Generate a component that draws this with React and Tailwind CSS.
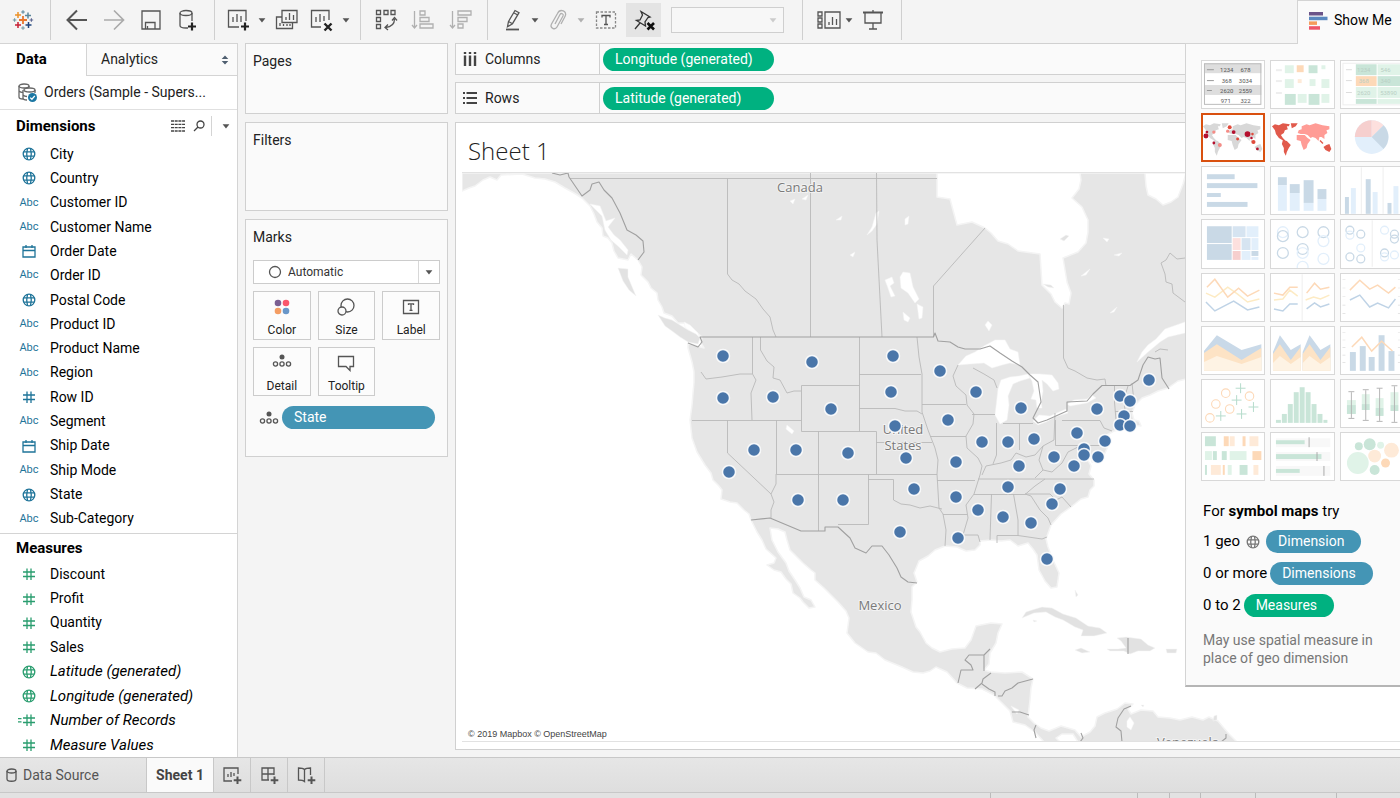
import React, { useState } from "react";

const dimensions = [
  ["geo", "City"],
  ["geo", "Country"],
  ["abc", "Customer ID"],
  ["abc", "Customer Name"],
  ["date", "Order Date"],
  ["abc", "Order ID"],
  ["geo", "Postal Code"],
  ["abc", "Product ID"],
  ["abc", "Product Name"],
  ["abc", "Region"],
  ["num", "Row ID"],
  ["abc", "Segment"],
  ["date", "Ship Date"],
  ["abc", "Ship Mode"],
  ["geo", "State"],
  ["abc", "Sub-Category"],
];

const measures = [
  ["num", "Discount"],
  ["num", "Profit"],
  ["num", "Quantity"],
  ["num", "Sales"],
  ["geo", "Latitude (generated)", true],
  ["geo", "Longitude (generated)", true],
  ["calc", "Number of Records", true],
  ["num", "Measure Values", true],
];

// one mark per state, in map coordinates
const states = [
  [723, 356], [812, 362], [893, 356], [940, 371], [723, 398], [773, 397], [831, 409],
  [891, 392], [976, 392], [1021, 408], [948, 420], [895, 426], [1149, 380], [1097, 409],
  [1120, 396], [1130, 401], [1124, 416], [1120, 425], [1130, 426], [1105, 441], [1077, 433],
  [1084, 449], [1084, 455], [1098, 457], [754, 450], [796, 450], [848, 453], [906, 458],
  [956, 462], [982, 442], [1008, 442], [1034, 439], [1054, 457], [1074, 466], [1019, 466],
  [729, 472], [798, 500], [843, 500], [914, 489], [956, 497], [1008, 487], [1060, 489],
  [1052, 504], [978, 510], [1003, 517], [1031, 523], [900, 532], [958, 538], [1047, 559],
];

/* ---------- icons ---------- */

const Icon = ({ children, className = "h-6 w-6", box = "0 0 24 24" }) => (
  <svg viewBox={box} className={className} fill="none" stroke="currentColor" strokeWidth="1.3" aria-hidden="true">
    {children}
  </svg>
);

const Caret = ({ className = "text-[#555]" }) => (
  <svg viewBox="0 0 8 5" className={`h-[5px] w-2 shrink-0 ${className}`} aria-hidden="true">
    <path d="M0.6 0.3h6.8L4 4.5z" fill="currentColor" />
  </svg>
);

const Plus = ({ x, y, r, c, w = 1.5 }) => (
  <path d={`M${x - r} ${y}h${r * 2}M${x} ${y - r}v${r * 2}`} stroke={c} strokeWidth={w} />
);

const Logo = () => (
  <Icon>
    <Plus x={12} y={12} r={4} c="#e8762d" w={1.8} />
    <Plus x={7} y={7} r={3} c="#eb9129" />
    <Plus x={17} y={7.5} r={3} c="#5b879b" />
    <Plus x={7} y={17} r={3} c="#c72035" />
    <Plus x={17.5} y={17} r={3} c="#1f457e" />
    <Plus x={12} y={4} r={1.8} c="#59879b" w={1.1} />
    <Plus x={12} y={20} r={1.8} c="#7199a6" w={1.1} />
    <Plus x={3.6} y={12} r={1.8} c="#7199a6" w={1.1} />
    <Plus x={20.4} y={12} r={1.8} c="#5c6692" w={1.1} />
  </Icon>
);

const GeoGlyph = () => (
  <>
    <circle cx="13" cy="7" r="5.8" />
    <path d="M7.8 4.8h10.4M7.8 9.2h10.4M11.5 1.4c-1 3.6-1 7.6 0 11.2M14.5 1.4c1 3.6 1 7.6 0 11.2" />
  </>
);

const FieldIcon = ({ type }) => {
  if (type === "abc") return <span className="w-[26px] text-center text-[11px]">Abc</span>;
  return (
    <Icon box="0 0 26 14" className="h-[14px] w-[26px]">
      {type === "geo" && <GeoGlyph />}
      {type === "date" && <path d="M7 3h12v10H7zM7 6.5h12M10 1v3M16 1v3" />}
      {type === "num" && <path d="M7 5h12M7 9.5h12M11 1.5v11.5M15 1.5v11.5" />}
      {type === "calc" && <path d="M7 5h12M7 9.5h12M11 1.5v11.5M15 1.5v11.5M2 5.6h3.5M2 8.8h3.5" />}
    </Icon>
  );
};

const DetailIcon = () => (
  <Icon box="0 0 20 14" className="h-[14px] w-5">
    <circle cx="10" cy="3" r="2.5" fill="#555" stroke="none" />
    <circle cx="3.5" cy="10" r="2.1" />
    <circle cx="10" cy="10" r="2.1" />
    <circle cx="16.5" cy="10" r="2.1" />
  </Icon>
);

const ToolButton = ({ label, className = "w-[37px]", children }) => (
  <button type="button" aria-label={label} title={label} className={`flex h-[34px] items-center justify-center ${className}`}>
    {children}
  </button>
);

const Group = ({ className, children }) => (
  <div className={`flex h-10 shrink-0 items-center border-r border-[#cfcfcf] ${className}`}>{children}</div>
);

const Toolbar = () => (
  <header className="flex h-[43px] items-start text-[#555]">
    <Group className="w-[51px] pl-[11px]"><Logo /></Group>

    <Group className="w-[164px] justify-center pr-px">
      <ToolButton label="Undo">
        <Icon><path d="M22 12H3M12 2.5L2.5 12l9.5 9.5" strokeWidth="2" /></Icon>
      </ToolButton>
      <ToolButton label="Redo" className="w-[37px] text-[#aaa]">
        <Icon><path d="M2 12h19M12 2.5l9.5 9.5-9.5 9.5" strokeWidth="1.7" /></Icon>
      </ToolButton>
      <ToolButton label="Save">
        <Icon><path d="M3 3h18v18H3zM6.5 21v-6.500H16V21M8.5 18v3" /></Icon>
      </ToolButton>
      <ToolButton label="New data source">
        <Icon>
          <ellipse cx="10" cy="5" rx="6" ry="2.5" />
          <path d="M4 5v12.5c0 1.5 3 2.5 6 2.5h2M16 5v8" />
          <path d="M16 14.5v8M12 18.5h8" stroke="#222" strokeWidth="2.2" />
        </Icon>
      </ToolButton>
    </Group>

    <Group className="w-[146px] pl-[7px]">
      <ToolButton label="New worksheet" className="w-8">
        <Icon>
          <path d="M13 19H2.5V2.5H20V13M7 14V9M11 14V6M15 14V8" />
          <path d="M19 14.5v8M15 18.5h8" stroke="#222" strokeWidth="2.2" />
        </Icon>
      </ToolButton>
      <ToolButton label="New worksheet options" className="w-4"><Caret /></ToolButton>
      <ToolButton label="Duplicate" className="w-[34px]">
        <Icon>
          <path d="M7 2.5h15v12H7zM11 12V9M14.5 12V5M18.5 12V7M7 9H1.5v11.5h16v-6M5 18v-3M8.5 18v-2M12 18v-2M15 18v-2" />
        </Icon>
      </ToolButton>
      <ToolButton label="Clear sheet" className="w-[34px]">
        <Icon>
          <path d="M12 19H2.5V2.5H20V12M7 14V9M11 14V6M15 13V8" />
          <path d="M15.5 15.5l7 7M22.5 15.5l-7 7" stroke="#222" strokeWidth="2.4" />
        </Icon>
      </ToolButton>
      <ToolButton label="Clear sheet options" className="w-4"><Caret /></ToolButton>
    </Group>

    <Group className="w-[127px] pl-[6px]">
      <ToolButton label="Swap rows and columns">
        <Icon>
          <path d="M2.5 2.5h4v4h-4zM10 2.5h4v4h-4zM17 2.5h4v4h-4zM2.5 9.5h4v4h-4zM2.5 16.5h4v4h-4z" />
          <path d="M20.5 11c0 6-4 8-9 8.500M18 12.500l2.500-3 2.500 3M14 16.500l-3 3 3 2.500" />
        </Icon>
      </ToolButton>
      <ToolButton label="Sort ascending" className="w-[38px] text-[#b0b0b0]">
        <Icon><path d="M3.5 3v16M1 17l2.500 3 2.500-3M9 3h5v4H9zM9 9.500h9v4H9zM9 16h13v4H9z" /></Icon>
      </ToolButton>
      <ToolButton label="Sort descending" className="w-[37px] text-[#b0b0b0]">
        <Icon><path d="M3.5 3v16M1 17l2.500 3 2.500-3M9 3h13v4H9zM9 9.500h9v4H9zM9 16h5v4H9z" /></Icon>
      </ToolButton>
    </Group>

    <Group className="w-[315px] pl-[9px]">
      <ToolButton label="Highlight" className="w-8">
        <Icon>
          <path d="M7.5 13.500L14 2.500l4 2.200-6.500 11-5 3zM7.500 13.500l4 2.200M12.700 4.800l4 2.200" />
          <path d="M5 21.500h13" strokeWidth="1.8" />
        </Icon>
      </ToolButton>
      <ToolButton label="Highlight options" className="w-3"><Caret /></ToolButton>
      <ToolButton label="Group members" className="w-[34px] text-[#b0b0b0]">
        <Icon><path d="M9 16l5-9.500c1.200-2 4-.5 3 1.500l-6 11c-2 3.500-7.500 1-5.500-3l6-10.500C14 0 22 3 19 8.500l-4 7.500" /></Icon>
      </ToolButton>
      <ToolButton label="Group options" className="w-3"><Caret className="text-[#b0b0b0]" /></ToolButton>
      <ToolButton label="Show mark labels" className="mr-[2px] w-[37px]">
        <Icon>
          <path d="M2.5 4h19v16h-19z" strokeDasharray="2.5 1.5" stroke="#888" />
          <path d="M8 9.500V7.500h8v2M12 7.500v9M10 16.500h4" />
        </Icon>
      </ToolButton>
      <ToolButton label="Fix axes" className="w-[35px] bg-[#e4e4e4] text-[#333]">
        <Icon>
          <path d="M9 3.500l9 5.500-2 .5-3 4.500.5 4-9-5.500 3.500-.5L10.500 7zM8 15l-5 6" />
          <path d="M15.500 15l6.500 6.500M22 15l-6.500 6.500" stroke="#111" strokeWidth="2.600" />
        </Icon>
      </ToolButton>
      <div className="ml-[10px] flex h-[26px] w-[113px] items-center border border-[#cfcfcf] bg-[#f7f7f7] pr-[6px]">
        <select aria-label="Fit" disabled className="h-full min-w-0 flex-1 appearance-none bg-transparent" />
        <Caret className="text-[#ccc]" />
      </div>
    </Group>

    <Group className="w-[99px] pl-[10px]">
      <ToolButton label="Show cards" className="w-8">
        <Icon>
          <path d="M1 4h4v4H1zM1 10h4v4H1zM1 16h4v4H1zM8 4h15v16H8zM12 17v-3M15.5 17V9M19.5 17v-6" />
        </Icon>
      </ToolButton>
      <ToolButton label="Show cards options" className="w-2"><Caret /></ToolButton>
      <ToolButton label="Presentation mode" className="ml-1 w-8">
        <Icon><path d="M2 4.500h20" strokeWidth="2" /><path d="M4 4.500V15h16V4.500M12 15v6M8 21h8M12 2v2" /></Icon>
      </ToolButton>
    </Group>
  </header>
);

const FieldList = ({ fields, className }) => (
  <ul className={`grid auto-rows-fr ${className}`}>
    {fields.map(([type, name, italic]) => (
      <li key={name} className="flex items-center gap-2 pl-4">
        <FieldIcon type={type} />
        <span className={italic ? "text-[15px] text-black italic" : "text-black"}>{name}</span>
      </li>
    ))}
  </ul>
);

const Sidebar = () => (
  <aside className="flex w-[238px] shrink-0 flex-col border-r border-[#d4d4d4] bg-white">
    <div role="tablist" className="flex h-[33px] border-t border-[#d4d4d4]">
      <button type="button" role="tab" aria-selected="true" className="w-[86px] pb-[2px] pl-4 text-left text-[15px] font-bold text-black">
        Data
      </button>
      <button
        type="button"
        role="tab"
        aria-selected="false"
        className="flex flex-1 items-center justify-between border-b border-l border-[#d4d4d4] bg-[#fafafa] pr-2 pl-[14px]"
      >
        Analytics
        <svg viewBox="0 0 8 10" className="h-[10px] w-2" fill="#4f5f70" aria-hidden="true">
          <path d="M4 0.500l3.300 3.600H0.700zM4 9.500L0.700 5.900h6.600z" />
        </svg>
      </button>
    </div>
    <div className="flex h-[34px] items-center gap-[6px] border-b border-[#e0e0e0] pl-[18px]">
      <Icon box="0 0 20 20" className="h-5 w-5 text-[#666]">
        <ellipse cx="6" cy="3" rx="5" ry="2" />
        <path d="M1 3v11c0 1.500 2 2 4 2M5 7v8c0 1.500 2 2 4 2M11 3v1.500M1 8c1 1 2 1.500 4 1.500M5 12c1 1 2 1.500 4 1.500" />
        <ellipse cx="11.5" cy="7" rx="5.5" ry="2" />
        <path d="M17 7v3" />
        <circle cx="14.5" cy="14.5" r="4.500" fill="#1b77a3" stroke="none" />
        <path d="M12.200 14.600l1.700 1.600 2.900-3.400" stroke="#fff" />
      </Icon>
      <span>Orders (Sample - Supers...</span>
    </div>
    <div className="flex h-8 items-center text-[#444]">
      <h2 className="flex-1 pl-4 text-[15px] font-bold text-black">Dimensions</h2>
      <button type="button" aria-label="View data" className="mr-2">
        <Icon box="0 0 14 12" className="h-3 w-[14px]">
          <path d="M0 1h14M0 4.300h14M0 7.600h14M0 11h14" strokeDasharray="3 0.700" />
        </Icon>
      </button>
      <button type="button" aria-label="Find field" className="mr-[6px]">
        <Icon box="0 0 12 12" className="h-3 w-3"><circle cx="7.5" cy="4.5" r="3.5" /><path d="M5 7L1 11" /></Icon>
      </button>
      <button type="button" aria-label="Field options" className="flex h-5 items-center border-l border-[#d4d4d4] pr-[7px] pl-[10px]">
        <Caret />
      </button>
    </div>
    <FieldList fields={dimensions} className="h-[389px] text-[#1f7499]" />
    <h2 className="mt-[2px] h-[29px] border-t border-[#d4d4d4] pl-4 text-[15px] leading-[28px] font-bold text-black">Measures</h2>
    <FieldList fields={measures} className="flex-1 text-[#2a9d6f]" />
  </aside>
);

const markCards = [
  ["Color", (
    <Icon key="c" box="0 0 18 18" className="h-[18px] w-[18px]">
      <g stroke="none">
        <circle cx="5" cy="5" r="3.3" fill="#7b5f92" />
        <circle cx="13" cy="5" r="3.3" fill="#f9566b" />
        <circle cx="5" cy="13" r="3.3" fill="#f49d63" />
        <circle cx="13" cy="13" r="3.3" fill="#6997c9" />
      </g>
    </Icon>
  )],
  ["Size", (
    <Icon key="s" box="0 0 18 18" className="h-[18px] w-[18px]">
      <circle cx="10.5" cy="7.5" r="6.5" />
      <circle cx="5" cy="13" r="4" fill="#fafafa" />
    </Icon>
  )],
  ["Label", (
    <Icon key="l" box="0 0 18 18" className="h-[18px] w-[18px]">
      <path d="M1.5 2.500h15v13h-15zM6.500 7V5.800h5V7M9 5.800v6.500M7.500 12.300h3" />
    </Icon>
  )],
  ["Detail", <DetailIcon key="d" />],
  ["Tooltip", (
    <Icon key="t" box="0 0 18 18" className="h-[18px] w-[18px]">
      <path d="M1.5 2.500h15v10H13v4L9 12.500H1.500z" />
    </Icon>
  )],
];

const Shelf = ({ title, className = "", children }) => (
  <section className={`border border-[#d0d0d0] bg-[#fafafa] px-[7px] pt-2 ${className}`}>
    <h2 className="leading-[18px]">{title}</h2>
    {children}
  </section>
);

const Pill = ({ className, children }) => (
  <span className={`inline-flex h-[23px] items-center rounded-full pl-3 text-[14px] whitespace-nowrap text-white ${className}`}>
    {children}
  </span>
);

const Shelves = () => (
  <div className="flex w-[203px] shrink-0 flex-col gap-2">
    <Shelf title="Pages" className="h-[71px]" />
    <Shelf title="Filters" className="h-[89px]" />
    <Shelf title="Marks" className="h-[238px]">
      <div className="mt-[14px] flex h-6 items-center border border-[#ccc] bg-white pl-[14px] text-[#555]">
        <Icon box="0 0 14 14" className="h-[14px] w-[14px]"><circle cx="7" cy="7" r="5.5" /></Icon>
        <select aria-label="Mark type" className="ml-[6px] h-full flex-1 appearance-none text-[12px] text-[#333]">
          <option>Automatic</option>
        </select>
        <span className="flex h-full w-[21px] items-center justify-center border-l border-[#d8d8d8]"><Caret /></span>
      </div>
      <div className="mt-[7px] grid grid-cols-3 gap-[7px]">
        {markCards.map(([name, icon]) => (
          <button
            key={name}
            type="button"
            className="flex h-[49px] flex-col items-center justify-end border border-[#ccc] bg-[#fcfcfc] pb-px text-[12px] text-[#555]"
          >
            <span className="flex h-6 items-start">{icon}</span>
            <span className="leading-4 text-[#222]">{name}</span>
          </button>
        ))}
      </div>
      <div className="mt-[10px] flex items-center pl-[6px] text-[#555]">
        <DetailIcon />
        <Pill className="ml-[3px] w-[153px] bg-[#4495b5]">State</Pill>
      </div>
    </Shelf>
  </div>
);

const AxisShelf = ({ name, icon, field }) => (
  <div className="flex h-8 items-center border border-r-0 border-[#d0d0d0] bg-[#fafafa]">
    <div className="flex h-full w-[144px] items-center gap-2 border-r border-[#d0d0d0] pl-[7px]">
      <Icon box="0 0 14 14" className="h-[14px] w-[14px] text-[#444]">{icon}</Icon>
      {name}
    </div>
    <Pill className="ml-[3px] w-[171px] bg-[#00b180]">{field}</Pill>
  </div>
);

/* ---------- map ---------- */

const LAND =
  "M462 173V191L469 188 475 186 483 180 490 177 497 180 501 175 522 174 535 178 545 179 555 182 565 188 574 193 582 198 590 206 594 214 597 222 602 228 603 236 608 238 612 243 614 251 618 258 628 260 631 254 638 260 642 267 641 275 648 282 651 288 657 293 658 300 662 307 664 313 672 316 678 323 685 323 691 328 702 337 701 343 704 348 697 346 688 343 688 348 692 362 694 372 694 382 693 393 692 405 690 420 692 438 697 452 705 465 711 473 713 480 719 486 722 490 721 499 730 502 737 503 744 510 749 514 751 520 757 532 762 540 766 549 776 558 774 563 767 565 774 570 781 572 786 579 791 584 793 593 800 598 803 602 809 608 815 607 811 600 804 597 800 588 795 580 789 571 786 563 778 552 772 540 770 528 778 529 785 532 787 540 790 550 797 557 803 563 811 570 815 573 815 580 824 588 830 594 838 602 846 611 849 618 847 633 855 643 868 652 876 653 885 660 902 667 913 672 923 673 930 671 936 667 947 672 957 683 967 688 982 689 994 695 1000 701 1010 711 1013 722 1025 725 1035 732 1044 742H1060L1056 738 1062 734 1073 734 1078 742H1237L1229 734 1223 727 1218 721 1209 717 1203 720 1192 717 1180 720 1170 718 1158 717 1153 711 1141 710 1131 714 1128 709 1133 704 1125 703 1117 709 1105 713 1097 717 1095 726 1090 732 1081 737 1075 730 1061 726 1049 731 1041 728 1034 723 1028 717 1030 700 1031 688 1033 679 1022 672 1005 673 991 672 984 670 989 664 990 653 996 643 998 633 1002 624 991 623 976 626 971 640 965 648 952 649 940 652 932 648 926 643 920 632 916 627 911 612 912 600 912 587 917 582 914 573 919 561 928 556 935 550 945 546 957 547 966 551 975 550 980 545 980 541 991 540 1001 541 1010 540 1018 546 1028 543 1033 549 1037 555 1039 570 1045 581 1051 588 1057 587 1059 573 1053 560 1048 547 1046 539 1051 525 1061 514 1071 507 1081 499 1088 497 1090 490 1094 486 1094 480 1089 474 1091 466 1085 455 1089 448 1092 462 1098 462 1105 453 1110 442 1107 435 1114 431 1125 429 1133 425 1141 426 1139 421 1134 420 1132 413 1135 405 1139 401 1142 398 1150 395 1158 391 1168 388 1178 381 1190 378 1400 378V173Z";

const HUDSON_BAY =
  "M937 173V197L950 199 957 225 972 222 985 228 991 233 998 241 1008 244 1018 251 1040 254 1042 285 1051 294 1055 302 1062 308 1065 303 1069 304 1071 293 1067 282 1063 258 1078 252 1086 243 1088 232 1088 220 1082 207 1072 198 1079 189 1081 180 1080 173ZM1145 173L1146 186 1148 195 1156 199 1163 205 1171 202 1178 197 1183 184 1186 173Z";

const LAKES =
  "M958 365L966 356 975 352 984 346 995 340 1005 340 1010 349 1018 352 1020 365 1010 363 1002 365 992 368 984 363 970 364ZM998 389L1001 380 1010 377 1019 376 1028 374 1030 378 1020 381 1013 384 1008 396 1009 405 1007 420 1000 424 995 415 997 398ZM1028 374L1040 374 1052 375 1058 383 1059 389 1053 391 1047 384 1042 380 1043 391 1041 402 1042 408 1037 408 1036 400 1031 399 1034 391 1032 381ZM1033 421L1039 415 1050 416 1066 409 1068 413 1055 417 1046 422 1038 425ZM1067 404L1074 400 1087 399 1092 395 1096 398 1087 403 1070 406ZM1137 362L1142 352 1148 345 1156 339 1165 329 1185 322V333L1168 337 1160 342 1148 352ZM900 277L903 272 910 273 913 287 919 299 915 303 908 293 901 288ZM885 280L892 277 894 283 890 286 895 296 891 297 888 288ZM903 312L910 318 908 322 904 320ZM917 304L923 307 922 318 919 319ZM985 325L988 321 992 325 989 331ZM876 213L879 211 877 224 872 231 867 235 872 227ZM905 219L909 216 908 224 905 225ZM836 220L842 216 841 220ZM850 255L855 252 853 257ZM790 201L795 199 793 204ZM802 199L808 195 806 200ZM1081 276L1090 269 1086 275ZM1110 313L1117 307 1114 312ZM1103 238L1109 239 1107 242ZM1114 255L1122 253 1119 256ZM787 425L794 431 792 434 786 429ZM684 322L690 325 698 333 699 339 692 333 685 327ZM590 204L600 206 606 221 615 218 608 227 614 235 620 240 628 250 627 255 619 247 611 240 605 230 602 216ZM1011 706L1019 710 1017 714ZM1127 721L1130 717 1134 723 1131 730 1127 727Z";

const ISLANDS =
  "M658 315L665 318 672 320 680 325 688 330 696 334 700 338 698 344 688 342 680 337 672 331 665 326ZM618 268L628 269 628 277 636 296 629 290 623 281ZM1022 618L1026 612 1032 610 1042 607 1052 608 1063 614 1076 618 1088 626 1100 628 1107 633 1094 636 1081 636 1083 630 1075 627 1063 620 1055 617 1046 612 1034 613ZM1075 650L1081 648 1090 652 1082 653ZM1107 649L1118 649 1126 648 1121 641 1117 638 1126 637 1141 639 1148 645 1155 648 1150 651 1138 651 1130 654 1124 651 1110 651ZM1166 649H1177L1176 653H1167ZM1075 590L1078 595 1076 597ZM1043 284L1051 285 1054 288 1048 287ZM1060 239L1066 235 1069 236 1064 241ZM1033 620L1037 621 1034 622ZM1141 705L1144 705 1143 707ZM1214 716L1217 715 1217 720 1213 721Z";

const STATE_LINES =
  "M570 178.500H937M727.500 178.500V274L732 280 739 284 745 291 756 299 763 309 770 317 773 330 776 337M810.500 173V337M876.500 173L877 240 882 337M933.500 337V286L985 228M1063.500 305V358L1068 368 1075 371 1087 378 1097 380 1105 379 1106 386M692 420.500H801.500M701 372L706 379 722 377 740 374H752M752.500 337V374L756 380 751 393 752 420M760.500 337V350L767 361 774 367 773 378 780 380 787 393 794 391 801 391M801.500 385.500H859.500M801.500 385.500V431.500H876.500V474M859.500 337V431.500M859 374.500H921M859 408.500H895L905 411 917 411 922 414M917 337L919 357 922 374 922 404 922 412 928 430 935 448 938 460 937 474M922 404.500H966M930 436.500H966M876 442.500H932M776.500 420V474.500H937M818.500 431V531M868.500 474V524.500H838M868 479.500H893.500V500L901 504 910 505 920 508 930 506 942 509M727.500 420V453L771 494 776 484V474M771 494L774 502 771 510 771 518M937 474L939 508 943 514 946 530 945 546M937 480.500H975M943 514.500H967M958 365L953 376 956 386 966 395 967 405 974 414 973 424 966 436 967 448 978 458 982 466 980 475 974 494 966 505 968 518 963 535H978L980 542M972 414.500H995M973 368L984 374 994 380 997 388M996.500 423V455L993 464M1019.500 423V450M1003 423.500H1033M982 475L986 466 1001 463 1011 460 1016 453 1026 457 1035 455 1043 446 1054 440 1055 413M1055.500 420V445.500H1100M1062 420.500H1100L1104 428 1112 431M1114.500 386V402L1116 420M1115 411.500H1133M1128 386L1124 399 1125 411M1132 383L1134 402M978 479H1094M974 494.500H1025L1035 486 1045 479M991.500 494L990 540M1013.500 494L1018 520V536M997 543V535.500H1018L1042 539 1047 537M1025 494L1031 496 1040 510 1048 518 1051 525M1025 494H1050L1056 500 1062 497 1071 507M1035 478L1043 470 1052 472 1062 463 1068 452 1078 447M1043 470L1039 460 1043 446M1185 258L1177 259 1170 253 1166 260 1161 263 1165 274 1166 282 1172 284 1173 293 1185 302M1155 352L1160 349 1168 350";

const COUNTRY_LINES =
  "M552 173L560 175 568 173 569 177 582 196 590 190 592 184 599 182 604 190 612 198 620 213 627 230 636 235 643 241 644 252 638 260M688 343L698 347 702 342 700 337H933.500L935 333 938 341 950 342 958 347 965 349 980 349 990 346 1000 353 1012 361 1022 367 1030 375 1038 382 1041 402 1033 418 1038 423 1047 420 1067 411 1067 402 1087 401 1093 394 1102 385.500H1130L1138 380 1143 365 1148 357 1155 359 1160 358 1162 378 1169 389M751 520L770 518 801 531H825V527H838L850 538 855 548 866 553 872 546 882 546 889 555 897 568 901 577 908 582 917 583M958 683L961 670H973L971 665 965 660 969 655H984V671M984 655L990 649M975 689L982 683 983 679 991 673M982 684L989 689 995 692 995 696M998 696H1002L1005 691 1012 688 1018 683 1033 679M1012 712L1020 712 1029 715M1036 725L1034 730 1036 738M1081 733L1083 738 1080 742M1131 706L1124 709 1118 718 1116 727 1121 731 1122 742M1226 734L1226 738 1221 742M1128 638V654";

const SymbolMap = () => (
  <svg
    viewBox="462 173 938 569"
    preserveAspectRatio="xMinYMin slice"
    className="block h-full w-full"
    role="img"
    aria-label="Symbol map of states"
  >
    <g stroke="#f4f4f4" strokeWidth="1.5" strokeLinejoin="round">
      <path d={LAND} fill="#e6e6e6" />
      <path d={HUDSON_BAY} fill="#fff" />
      <path d={LAKES} fill="#fff" strokeWidth="0.5" />
      <path d={ISLANDS} fill="#e2e2e2" strokeWidth="0.5" />
    </g>
    <g fill="none" strokeLinejoin="round">
      <path d={STATE_LINES} stroke="#b9b9b9" strokeWidth="0.9" />
      <path d={COUNTRY_LINES} stroke="#a0a0a0" strokeWidth="1.1" />
    </g>
    <g
      className="font-['Open_Sans','Noto_Sans',sans-serif] text-[13px]"
      textAnchor="middle"
      fill="#7a7a7a"
      stroke="#f2f2f2"
      strokeWidth="2"
      paintOrder="stroke"
    >
      <text x="800" y="192">Canada</text>
      <text x="903" y="434">United</text>
      <text x="903" y="450">States</text>
      <text x="880" y="610">Mexico</text>
      <text x="1188" y="747">Venezuela</text>
    </g>
    <g fill="#4a76a9" stroke="#fff" strokeOpacity="0.9" strokeWidth="1.5">
      {states.map(([x, y]) => (
        <circle key={`${x}-${y}`} cx={x} cy={y} r="6.5" />
      ))}
    </g>
  </svg>
);

const Worksheet = () => (
  <main className="flex min-w-0 flex-1 flex-col gap-2">
    <div className="flex h-[71px] flex-col justify-between">
      <AxisShelf
        name="Columns"
        field="Longitude (generated)"
        icon={<path d="M2 0v2M7 0v2M12 0v2M2 3.500V14M7 3.500V14M12 3.500V14" strokeWidth="2.4" />}
      />
      <AxisShelf
        name="Rows"
        field="Latitude (generated)"
        icon={<path d="M0 2h2M0 7h2M0 12h2M3.500 2H14M3.500 7H14M3.500 12H14" strokeWidth="2" />}
      />
    </div>
    <section className="flex flex-1 flex-col border border-r-0 border-[#d0d0d0] bg-white pb-[7px] pl-[6px]">
      <h1 className="h-[49px] pl-[6px] font-['Open_Sans','Noto_Sans',sans-serif] text-2xl leading-[56px] font-light text-[#222]">Sheet 1</h1>
      {/* keeps the drawing out of the height calculation of the row */}
      <div className="relative flex-1 overflow-hidden border-y border-[#e2e2e2]">
        <div className="absolute inset-0"><SymbolMap /></div>
        <p className="absolute bottom-px left-[6px] font-['Liberation_Sans',sans-serif] text-[9px] leading-[12px] text-[#444]">
          © 2019 Mapbox © OpenStreetMap
        </p>
      </div>
    </section>
  </main>
);

/* ---------- show me ---------- */

const B1 = "#c9d9e6";
const B2 = "#e2effb";
const G1 = "#c9e5d8";
const G2 = "#e0f3e8";
const O1 = "#fdd9b8";
const O2 = "#feead8";

const Rects = ({ items }) =>
  items.map(([x, y, w, h, c], i) => <rect key={i} x={x} y={y} width={w} height={h} fill={c} />);

const Rings = ({ items, r = 5, w = 1.1 }) =>
  items.map(([x, y, c], i) => <circle key={i} cx={x} cy={y} r={r} fill="none" stroke={c} strokeWidth={w} />);

const Line = ({ d, c }) => <path d={d} fill="none" stroke={c} strokeWidth="1.5" />;

const World = ({ west, east, south }) => (
  <>
    <path d="M2 13L5 11 9 12 13 10 20 11 19 13 17 13 18 16 15 17 14 20 11 22 13 25 16 28 14 28 9 25 6 21 5 17ZM21 10L28 10 26 13 22 15ZM13 27L17 28 21 32 19 35 17 39 16 43 14 39 14 35 12 31Z" fill={west} />
    <path d="M28 20L29 17 32 16 32 13 37 11 40 12 46 10 53 12 60 13 60 16 57 17 58 20 55 22 55 26 52 24 50 24 49 28 46 25 43 24 41 25 38 22 35 21 31 21ZM27 22L35 22 38 25 41 27 38 31 37 35 34 37 32 32 31 28 27 27Z" fill={east} />
    <path d="M54 34L57 32 60 31 62 36 60 39 56 37ZM51 27L54 30 53 31 50 28Z" fill={south} />
  </>
);

const Digits = ({ rows, fill }) => (
  <g fill={fill} className="text-[6px]" textAnchor="middle">
    {rows.map(([x, y, t]) => <text key={t} x={x} y={y}>{t}</text>)}
  </g>
);

const thumbs = [
  ["text tables", (
    <>
      <Rects items={[[3, 3, 58, 10, "#dedede"], [3, 25, 58, 10, "#dedede"], [6, 9, 7, 1, "#999"], [6, 20, 7, 1, "#999"], [6, 30, 5, 1, "#999"]]} />
      <rect x="3.5" y="3.5" width="57" height="41" fill="none" stroke="#bbb" />
      <Digits fill="#555" rows={[[26, 12, "1234"], [45, 12, "678"], [26, 23, "368"], [45, 23, "3034"], [26, 33, "2620"], [45, 33, "2559"], [25, 43, "971"], [45, 43, "322"]]} />
    </>
  )],
  ["heat maps", (
    <Rects items={[[6, 9, 6, 2, "#eee"], [6, 20, 6, 2, "#eee"], [6, 32, 6, 2, "#eee"], [15, 5, 9, 8, G2], [27, 5, 7, 7, O1], [39, 5, 9, 8, G1], [52, 5, 4, 4, G2], [15, 19, 9, 9, G2], [28, 19, 4, 4, O2], [40, 19, 6, 7, G2], [52, 19, 8, 9, G2], [15, 34, 11, 11, G1], [28, 34, 9, 9, G2], [39, 34, 11, 11, G1], [52, 34, 8, 9, G2]]} />
  )],
  ["highlight tables", (
    <>
      <rect x="3" y="3" width="62" height="42" fill="none" stroke="#eee" />
      <Rects items={[[6, 9, 6, 1, "#ddd"], [6, 20, 6, 1, "#ddd"], [6, 32, 6, 1, "#ddd"], [16, 4, 21, 11, G1], [38, 4, 27, 11, G2], [16, 16, 21, 10, O1], [38, 16, 27, 10, G1], [16, 27, 21, 11, G2], [38, 27, 27, 11, G2], [16, 39, 21, 5, G1], [38, 39, 27, 5, G2]]} />
      <Digits fill="#b9cfc4" rows={[[24, 12, "1234"], [46, 12, "546"], [24, 23, "368"], [46, 23, "340"], [24, 35, "2620"], [49, 35, "53890"]]} />
    </>
  )],
  ["symbol maps", (
    <>
      <World west="#d8d8d8" east="#d8d8d8" south="#d8d8d8" />
      {[[5, 23, 2.5, "#b5102e"], [6, 19, 1.4, "#b5102e"], [13, 19, 1.7, "#f58c86"], [13, 30, 1.4, "#b5102e"], [19, 32, 2, "#f58c86"], [29, 14, 2, "#e04b3c"], [27, 18, 1.7, "#f58c86"], [33, 19, 1.9, "#b5102e"], [47, 21, 2.9, "#b5102e"], [37, 26, 1.5, "#e04b3c"], [51, 25, 1.3, "#b5102e"], [52, 21, 1.3, "#e04b3c"], [53, 29, 2.1, "#e04b3c"], [57, 36, 1.4, "#b5102e"]].map(([x, y, r, c]) => (
        <circle key={`${x}-${y}`} cx={x} cy={y} r={r} fill={c} />
      ))}
    </>
  )],
  ["maps", <World key="w" west="#e15a4c" east="#ff9c96" south="#e15a4c" />],
  ["pie charts", (
    <>
      <circle cx="32" cy="24" r="17" fill={B2} />
      <path d="M32 24H15A17 17 0 0 1 32 7Z" fill="#f6cfce" />
      <path d="M32 24V7A17 17 0 0 1 44 12Z" fill="#fde0de" />
      <path d="M32 24L44 12A17 17 0 0 1 44 36Z" fill={B1} />
    </>
  )],
  ["horizontal bars", <Rects key="r" items={[[6, 8, 28, 5, B1], [6, 17, 51, 5, B1], [6, 27, 14, 4, B1], [6, 36, 41, 5, B1]]} />],
  ["stacked bars", <Rects key="r" items={[[8, 11, 9, 8, B1], [8, 19, 9, 26, B2], [20, 18, 10, 9, B1], [20, 27, 10, 18, B2], [34, 14, 10, 23, B1], [34, 37, 10, 8, B2], [48, 23, 9, 10, B1], [48, 33, 9, 12, B2]]} />],
  ["side-by-side bars", <Rects key="r" items={[[5, 31, 4, 17, B1], [11, 22, 5, 26, B2], [21, 1, 1, 47, "#eee"], [26, 13, 5, 35, B1], [33, 26, 5, 22, B2], [43, 1, 1, 47, "#eee"], [48, 37, 4, 11, B1], [54, 20, 5, 28, B2]]} />],
  ["treemaps", <Rects key="r" items={[[6, 7, 25, 17, B1], [6, 25, 25, 16, B1], [32, 7, 13, 11, "#d6e4f1"], [46, 7, 12, 11, B2], [32, 19, 8, 12, "#fde0de"], [41, 19, 9, 12, "#d6e4f1"], [51, 19, 7, 12, B2], [32, 32, 8, 9, "#f6cfce"], [41, 32, 9, 9, B2], [51, 32, 7, 5, B1], [51, 38, 7, 3, B2]]} />],
  ["circle views", <Rings key="r" items={[[13, 13, B2], [13, 17, B1], [13, 34, B1], [33, 13, B1], [33, 30, B1], [33, 34, B2], [54, 13, B1], [54, 22, B2], [54, 40, B2], [33, 48, B2]]} r={5.5} w={1.3} />],
  ["side-by-side circles", (
    <>
      <rect x="32" y="1" width="1" height="47" fill="#eee" />
      <Rings items={[[10, 11, B1], [10, 16, B2], [21, 15, B1], [21, 29, B2], [10, 38, B1], [21, 40, B1], [45, 11, B2], [55, 15, B1], [55, 20, B1], [45, 34, B1], [45, 38, B2], [55, 36, B2]]} r={4} w={1.3} />
    </>
  )],
  ["lines (continuous)", (
    <>
      <Line c="#fdebc4" d="M5 20l9 4 13-10 10 7 10 8 12-3" />
      <Line c={O1} d="M6 14l8-8 13 18 11-9 9 8 12-6" />
      <Line c="#bfd3e6" d="M5 29l9 9 19-10 14 9 12-3" />
    </>
  )],
  ["lines (discrete)", (
    <>
      <rect x="32" y="1" width="1" height="47" fill="#eee" />
      <Line c="#fdebc4" d="M4 27l9-1 7-9 8 6M36 27l8-3 7 2 9-4" />
      <Line c={O1} d="M4 20l9 2 7-8h8M37 20l8-10 6 6 9-2" />
      <Line c="#bfd3e6" d="M4 36l9 2 7-7h8M37 36l8-6 6 4 9-3" />
    </>
  )],
  ["dual lines", (
    <>
      <Line c={O1} d="M10 17l10-10 10 9 8-4 11 8 7-6" />
      <Line c="#bfd3e6" d="M10 27l10-5 10 12 8-4 11 5 7-9" />
      <path d="M4 6v38M60 6v38" stroke="#ddd" strokeWidth="3" strokeDasharray="0.6 8" />
    </>
  )],
  ["area charts (continuous)", (
    <>
      <path d="M3 25L16 9 41 24 61 18V45H3Z" fill="#c9d9e8" />
      <path d="M3 27L16 18 41 34 61 22V45H3Z" fill="#fde3c5" />
      <path d="M3 36L16 30 41 38 61 31V45H3Z" fill="#fef3e4" />
    </>
  )],
  ["area charts (discrete)", (
    <>
      <path d="M3 26L10 9 21 24 31 18V45H3ZM33 26L40 9 51 24 61 18V45H33Z" fill="#c9d9e8" />
      <path d="M3 28L10 18 21 34 31 21V45H3ZM33 28L40 18 51 34 61 21V45H33Z" fill="#fde3c5" />
      <path d="M3 37L10 30 21 38 31 31V45H3ZM33 37L40 30 51 38 61 31V45H33Z" fill="#fef3e4" />
    </>
  )],
  ["dual combination", (
    <>
      <Rects items={[[10, 26, 6, 19, B1], [20, 20, 6, 25, B1], [29, 31, 6, 14, B1], [39, 9, 6, 36, B1], [49, 25, 6, 20, B1]]} />
      <Line c={O1} d="M12 21l10-10 10 14 10-10 11 10" />
      <path d="M4 6v38M60 6v38" stroke="#ddd" strokeWidth="3" strokeDasharray="0.6 7" />
    </>
  )],
  ["scatter plots", (
    <>
      <Rings items={[[9, 39, O1], [15, 25, O1], [25, 14, O1], [29, 30, O1], [49, 17, O1]]} r={4.3} />
      {[[40, 9], [36, 21], [53, 28], [41, 35], [20, 37]].map(([x, y]) => <Plus key={x} x={x} y={y} r={5} c="#b5dccb" w={1} />)}
    </>
  )],
  ["histogram", <Rects key="r" items={[[6, 41, 5, 3, G1], [12, 35, 5, 9, G1], [18, 25, 5, 19, G1], [24, 13, 5, 31, G1], [30, 8, 5, 36, G1], [36, 13, 5, 31, G1], [42, 25, 5, 19, G1], [48, 35, 5, 9, G1], [54, 41, 4, 3, G1]]} />],
  ["box-and-whisker", (
    <>
      <Rects items={[[7, 21, 9, 5, G2], [7, 26, 9, 9, G1], [22, 15, 8, 10, G2], [22, 25, 8, 6, G1], [36, 19, 8, 10, G2], [36, 29, 8, 8, G1], [51, 13, 8, 13, G2], [51, 26, 8, 6, G1]]} />
      <path d="M11.500 13v26M8.500 12.500h6M8.500 39.500h6M26 11v30M23 10.500h6M23 41.500h6M40 9v33M37 9h6M37 42.500h6M55 7v36M52 6.500h6M52 43.500h6" stroke="#b5b5b5" />
    </>
  )],
  ["gantt", <Rects key="r" items={[[4, 4, 11, 10, G1], [23, 4, 5, 10, O1], [29, 4, 5, 10, O2], [42, 4, 3, 10, O1], [49, 4, 9, 10, O2], [4, 19, 7, 9, G2], [12, 19, 4, 9, G1], [21, 19, 5, 9, G1], [29, 19, 17, 9, G2], [52, 19, 9, 9, O1], [4, 33, 2, 10, G1], [10, 33, 10, 10, O2], [22, 33, 2, 10, O1], [27, 33, 4, 10, G2], [39, 33, 8, 10, G1], [53, 33, 5, 10, O2]]} />],
  ["bullet graphs", <Rects key="r" items={[[6, 6, 55, 9, "#f8f8f8"], [6, 20, 55, 9, "#f8f8f8"], [6, 34, 55, 10, "#f8f8f8"], [6, 8, 29, 4, G1], [6, 22, 46, 5, G1], [6, 37, 24, 4, G1], [39, 5, 1, 10, "#aaa"], [47, 20, 1, 9, "#aaa"], [54, 34, 1, 10, "#aaa"]]} />],
  ["packed bubbles", (
    <g key="b">
      {[[18, 31, 11, G2], [19, 14, 4, G1], [30, 12, 6, G1], [41, 13, 3.5, G2], [35, 24, 6.5, O2], [52, 18, 7.5, O2], [46, 31, 4.5, O1], [35, 38, 5, G1]].map(([x, y, r, c]) => (
        <circle key={`${x}-${y}`} cx={x} cy={y} r={r} fill={c} />
      ))}
    </g>
  )],
];

const ShowMe = () => {
  const [selected, setSelected] = useState("symbol maps");

  return (
    <aside className="absolute top-0 right-0 flex w-[215px] flex-col overflow-hidden">
      <button
        type="button"
        className="z-10 -mb-px flex h-11 w-[103px] items-center gap-[6px] self-end border-t border-l border-[#d4d4d4] bg-[#fafafa] pb-1 pl-[11px] text-[14px] text-black"
      >
        <svg viewBox="0 0 19 18" className="h-[18px] w-[19px]" aria-hidden="true">
          <Rects items={[[0, 0, 14, 3.5, "#6b5489"], [0, 4.7, 18.5, 3.5, "#5a88bf"], [0, 9.4, 8, 3.5, "#f59b5c"], [0, 14.2, 11, 3.5, "#ee5468"]]} />
        </svg>
        <span className="whitespace-nowrap">Show Me</span>
      </button>
      <div className="h-[644px] border-t border-b-2 border-l border-[#d4d4d4] border-b-[#b5b5b5] bg-[#fafafa] pt-4 pl-[15px]">
        <div className="grid h-[421px] w-[203px] grid-cols-3 grid-rows-8 gap-x-[5px] gap-y-1">
          {thumbs.map(([name, art]) => (
            <button
              key={name}
              type="button"
              aria-label={name}
              aria-pressed={selected === name}
              onClick={() => setSelected(name)}
              className={`bg-white ${selected === name ? "outline-2 -outline-offset-2 outline-[#d9500f]" : "outline -outline-offset-1 outline-[#d8d8d8]"}`}
            >
              <svg viewBox="0 0 65 49" className="block h-full w-full" aria-hidden="true">{art}</svg>
            </button>
          ))}
        </div>
        <div className="mt-5 flex flex-col pl-[2px] text-[15px] text-black">
          <p className="leading-5">For <b>{selected}</b> try</p>
          <ul className="mt-[9px] flex flex-col gap-[9px]">
            <li className="flex h-[23px] items-center">
              1 geo
              <Icon box="0 0 26 14" className="h-[14px] w-[26px] text-[#777]"><GeoGlyph /></Icon>
              <Pill className="bg-[#4495b5] pr-[17px]">Dimension</Pill>
            </li>
            <li className="flex h-[23px] items-center gap-[3px]">
              0 or more <Pill className="bg-[#4495b5] pr-[17px]">Dimensions</Pill>
            </li>
            <li className="flex h-[23px] items-center gap-[3px]">
              0 to 2 <Pill className="bg-[#00b180] pr-[17px]">Measures</Pill>
            </li>
          </ul>
          <p className="mt-[14px] text-[14px] leading-[18px] text-[#777]">
            May use spatial measure in
            <br />
            place of geo dimension
          </p>
        </div>
      </div>
    </aside>
  );
};

const NewTab = ({ label, children }) => (
  <button type="button" aria-label={label} className="flex h-full w-[37px] items-center justify-center border-r border-[#c8c8c8]">
    <Icon box="0 0 20 20" className="h-5 w-5">
      {children}
      <path d="M15.500 11.500v7.500M11.700 15.300h7.600" strokeWidth="2" />
    </Icon>
  </button>
);

const SheetTabs = () => (
  <footer className="text-[#555]">
    <nav className="flex h-9 items-center border-y border-[#c8c8c8] bg-linear-to-b from-[#e6e6e6] to-[#dedede]">
      <button type="button" className="flex h-full w-[147px] items-center gap-[6px] border-r border-[#c8c8c8] pl-[6px]">
        <Icon box="0 0 11 14" className="h-[14px] w-[11px]">
          <ellipse cx="5.5" cy="3" rx="4.5" ry="2" />
          <path d="M1 3v8c0 3 9 3 9 0V3" />
        </Icon>
        Data Source
      </button>
      <button type="button" className="h-full w-[67px] border-r border-[#c8c8c8] bg-[#fafafa] font-bold text-[#444]">Sheet 1</button>
      <NewTab label="New worksheet"><path d="M10 16H2V3h14v6M6 12V9M9 12V7M12 11V8" /></NewTab>
      <NewTab label="New dashboard"><path d="M10 15H3V3h12v7M3 9h12M9 3v12" /></NewTab>
      <NewTab label="New story"><path d="M8.500 4.500C7 3 4.500 3 2.500 3v12c2.500 0 5 .5 6 1.500V4.500c1.500-1.500 4-1.500 6-1.500v7" /></NewTab>
    </nav>
    <div className="flex h-[5px] justify-end bg-[#e2e2e2]">
      <span className="w-[147px] border-l border-[#bbb]" />
      <span className="w-8 border-l border-[#bbb]" />
      <span className="w-[31px] border-l border-[#bbb]" />
      <span className="w-[55px] border-l border-[#bbb]" />
      <span className="w-[81px] border-l border-[#bbb]" />
      <span className="w-[64px] border-l border-[#bbb]" />
    </div>
  </footer>
);

const App = () => (
  <div className="relative flex min-h-screen flex-col overflow-hidden bg-[#f4f4f4] font-[Roboto,'Liberation_Sans',sans-serif] text-[14px] text-[#222]">
    <Toolbar />
    <div className="flex flex-1 gap-[7px] pb-[7px]">
      <div className="-mb-[7px] flex"><Sidebar /></div>
      <Shelves />
      <Worksheet />
    </div>
    <SheetTabs />
    <ShowMe />
  </div>
);

export default App;
